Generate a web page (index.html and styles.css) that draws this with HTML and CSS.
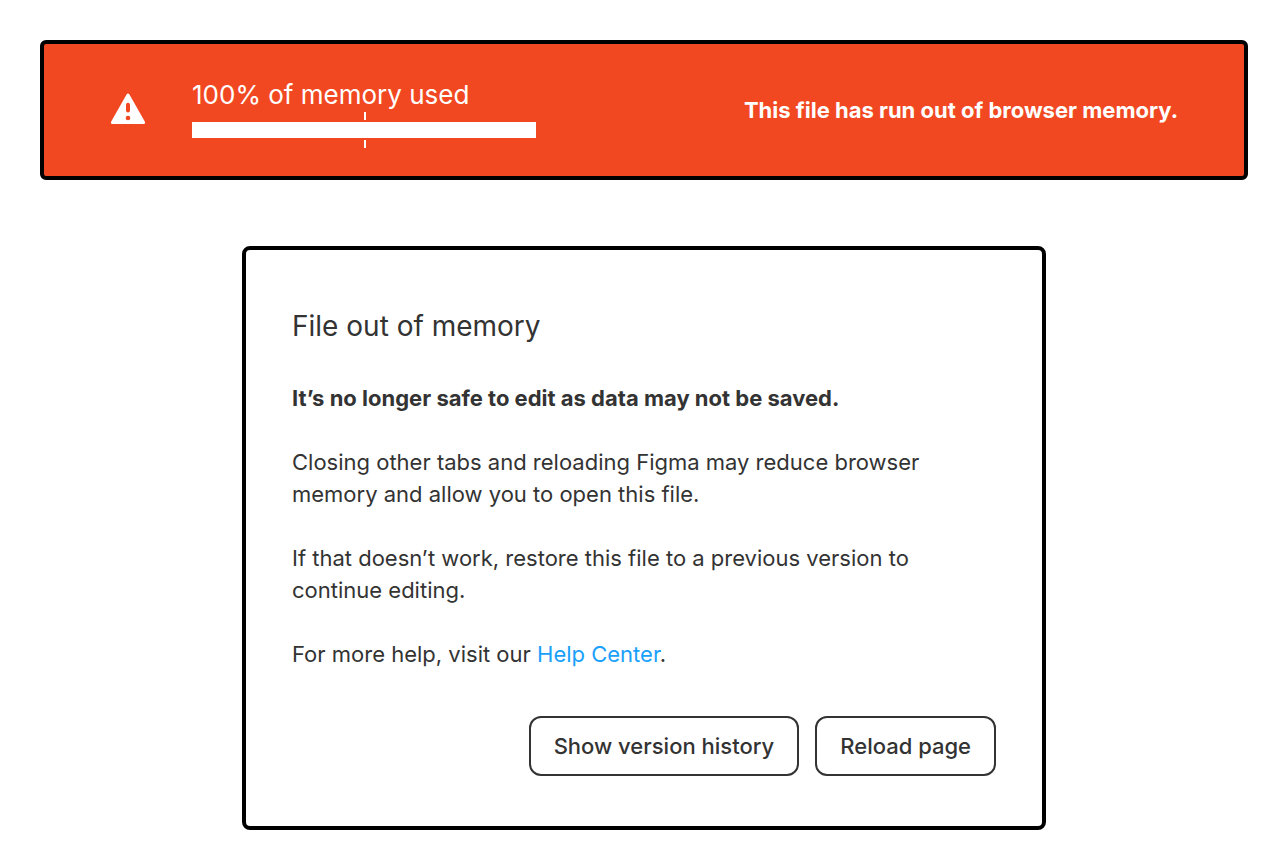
FILE: index.html
```html
<!DOCTYPE html>
<html lang="en">
<head>
  <meta charset="UTF-8">
  <meta name="viewport" content="width=device-width, initial-scale=1.0">
  <title>File out of memory</title>
  <link rel="stylesheet" href="styles.css">
</head>
<body>
  <div class="banner" role="alert">
    <svg class="warning-icon" viewBox="0 0 36 36" aria-hidden="true">
      <path class="triangle" d="M18 3 L33.6 30.6 H2.4 Z"></path>
      <path class="mark" d="M18 12.8 V18.6"></path>
      <circle class="dot" cx="18" cy="26" r="2.3"></circle>
    </svg>
    <div class="memory">
      <div class="memory-label">100% of memory used</div>
      <div class="meter">
        <div class="meter-fill" style="width: 100%"></div>
      </div>
    </div>
    <p class="banner-message">This file has run out of browser memory.</p>
  </div>

  <main class="dialog">
    <h1>File out of memory</h1>
    <p><strong>It’s no longer safe to edit as data may not be saved.</strong></p>
    <p>Closing other tabs and reloading Figma may reduce browser memory and allow you to open this file.</p>
    <p>If that doesn’t work, restore this file to a previous version to continue editing.</p>
    <p>For more help, visit our <a href="#help">Help Center</a>.</p>
    <div class="actions">
      <button type="button">Show version history</button>
      <button type="button">Reload page</button>
    </div>
  </main>
</body>
</html>
```

FILE: styles.css
```css
* {
  box-sizing: border-box;
}

body {
  margin: 0;
  padding: 40px;
  font-family: Inter, sans-serif;
  font-size: 22px;
  line-height: 32px;
  color: #333;
  background: #fff;
}

h1, p {
  margin: 0;
}

.banner {
  display: flex;
  align-items: center;
  padding: 28px 66px;
  border: 4px solid #000;
  border-radius: 6px;
  background: #f24822;
  color: #fff;
}

.warning-icon {
  width: 36px;
  height: 36px;
  margin-right: 46px;
  flex-shrink: 0;
}

.triangle {
  fill: #fff;
  stroke: #fff;
  stroke-width: 3;
  stroke-linejoin: round;
}

.mark {
  stroke: #f24822;
  stroke-width: 4;
  stroke-linecap: round;
}

.dot {
  fill: #f24822;
}

.memory {
  flex: 0 1 344px;
  padding-top: 6px;
}

.memory-label {
  font-size: 26px;
  line-height: 34px;
}

/* tick marks above and below the bar */
.meter {
  position: relative;
  padding: 10px 0;
}

.meter::before,
.meter::after {
  content: "";
  position: absolute;
  left: 50%;
  width: 2px;
  height: 8px;
  background: #fff;
}

.meter::before {
  top: 0;
}

.meter::after {
  bottom: 0;
}

.meter-fill {
  height: 16px;
  background: #fff;
}

.banner-message {
  margin-left: auto;
  font-weight: 700;
}

.dialog {
  max-width: 804px;
  margin: 66px auto 0;
  padding: 56px 46px 50px;
  border: 4px solid #000;
  border-radius: 8px;
}

.dialog h1 {
  margin-bottom: 36px;
  font-size: 28px;
  line-height: 40px;
  font-weight: 400;
}

.dialog p {
  margin-bottom: 32px;
}

.dialog strong {
  font-weight: 700;
}

.dialog a {
  color: #18a0fb;
  text-decoration: none;
}

.actions {
  display: flex;
  justify-content: flex-end;
  gap: 16px;
  padding-top: 14px;
}

.actions button {
  height: 60px;
  padding: 0 23px;
  border: 2px solid #333;
  border-radius: 12px;
  background: #fff;
  color: #333;
  font: inherit;
  font-weight: 500;
  cursor: pointer;
}
```
